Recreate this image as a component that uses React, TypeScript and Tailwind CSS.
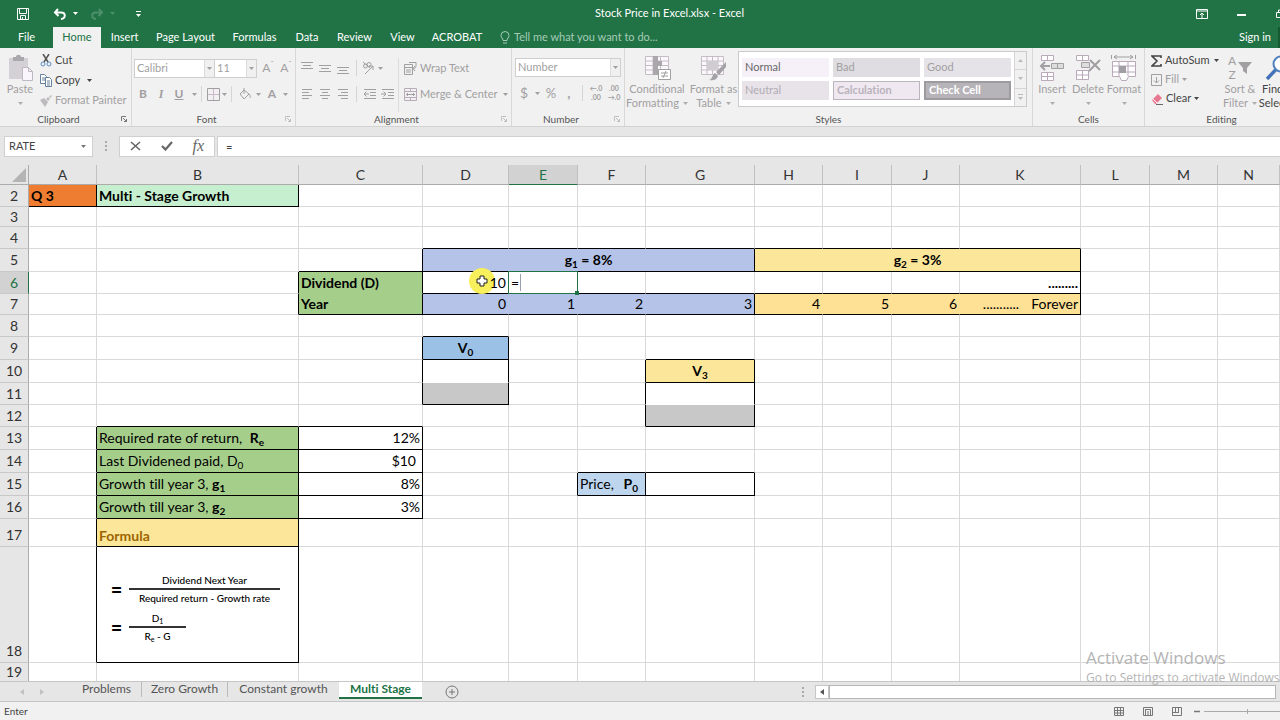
import { Fragment, type ReactNode } from 'react'
import clsx from 'clsx'
import { twMerge } from 'tailwind-merge'

const COLUMNS = [
  { name: 'A', width: 68 },
  { name: 'B', width: 202 },
  { name: 'C', width: 124 },
  { name: 'D', width: 86 },
  { name: 'E', width: 69 },
  { name: 'F', width: 68 },
  { name: 'G', width: 109 },
  { name: 'H', width: 68 },
  { name: 'I', width: 69 },
  { name: 'J', width: 68 },
  { name: 'K', width: 121 },
  { name: 'L', width: 69 },
  { name: 'M', width: 68 },
  { name: 'N', width: undefined },
]

const ROWS = [
  { n: 2, height: 22 },
  { n: 3, height: 20 },
  { n: 4, height: 22 },
  { n: 5, height: 23 },
  { n: 6, height: 22 },
  { n: 7, height: 21 },
  { n: 8, height: 22 },
  { n: 9, height: 23 },
  { n: 10, height: 23 },
  { n: 11, height: 22 },
  { n: 12, height: 22 },
  { n: 13, height: 23 },
  { n: 14, height: 23 },
  { n: 15, height: 23 },
  { n: 16, height: 23 },
  { n: 17, height: 28 },
  { n: 18, height: 116 },
  { n: 19, height: 19 },
]

// ranges with a black outline
const OUTLINES = [
  'A2:A2', 'B2:B2', 'C6:C7', 'D5:G5', 'H5:K5', 'D6:K6', 'D7:G7', 'H7:K7',
  'D9:D9', 'D10:D11', 'G10:G10', 'G11:G12', 'F15:F15', 'G15:G15',
  'B13:B13', 'B14:B14', 'B15:B15', 'B16:B16', 'C13:C13', 'C14:C14', 'C15:C15', 'C16:C16',
  'B17:B17', 'B18:B18',
].map((range) => {
  const [from, to] = range.split(':')
  return {
    left: from.charCodeAt(0),
    right: to.charCodeAt(0),
    top: Number(from.slice(1)),
    bottom: Number(to.slice(1)),
  }
})

const rightIsDark = (col: number, row: number) =>
  OUTLINES.some((o) => row >= o.top && row <= o.bottom && (o.right === col || o.left === col + 1))

const bottomIsDark = (col: number, row: number) =>
  OUTLINES.some((o) => col >= o.left && col <= o.right && (o.bottom === row || o.top === row + 1))

interface Cell {
  content?: ReactNode
  className?: string
  span?: number
}

const BLUE = 'bg-[#b4c3e7]'
const YELLOW = 'bg-[#fbe699]'
const GREEN = 'bg-[#a6ce8b]'

const Sub = ({ children }: { children: ReactNode }) => (
  <sub className="bottom-[-3px] text-[10px] leading-none">{children}</sub>
)

const CELLS: Record<string, Cell> = {
  A2: { content: 'Q 3', className: 'bg-[#ee7d31] font-bold' },
  B2: { content: 'Multi - Stage Growth', className: 'bg-[#c5efce] font-bold' },
  D5: { content: <>g<Sub>1</Sub> = 8%</>, className: `${BLUE} text-center font-bold`, span: 4 },
  H5: { content: <>g<Sub>2</Sub> = 3%</>, className: `${YELLOW} text-center font-bold`, span: 4 },
  C6: { content: 'Dividend (D)', className: `${GREEN} font-bold` },
  D6: { content: <PointerCell />, className: 'relative text-right' },
  E6: { content: <EditingCell />, className: 'relative' },
  K6: { content: '.........', className: 'text-right font-bold' },
  C7: { content: 'Year', className: `${GREEN} font-bold` },
  D7: { content: '0', className: `${BLUE} text-right` },
  E7: { content: '1', className: `${BLUE} text-right` },
  F7: { content: '2', className: `${BLUE} text-right` },
  G7: { content: '3', className: `${BLUE} text-right` },
  H7: { content: '4', className: 'bg-[#ffe195] text-right' },
  I7: { content: '5', className: 'bg-[#ffe195] text-right' },
  J7: { content: '6', className: 'bg-[#ffe195] text-right' },
  K7: { content: <><span className="mr-3">...........</span>Forever</>, className: 'bg-[#ffe195] text-right' },
  D9: { content: <>V<Sub>0</Sub></>, className: 'bg-[#9bc2e6] text-center font-bold' },
  D10: { className: 'bg-white' },
  D11: { className: 'bg-[#c8c8c8]' },
  G10: { content: <>V<Sub>3</Sub></>, className: `${YELLOW} text-center font-bold` },
  G11: { className: 'bg-white' },
  G12: { className: 'bg-[#c8c8c8]' },
  B13: { content: <>Required rate of return, <b className="ml-1">R<Sub>e</Sub></b></>, className: GREEN },
  C13: { content: '12%', className: 'text-right' },
  B14: { content: <>Last Dividened paid, D<Sub>0</Sub></>, className: GREEN },
  C14: { content: <span className="pr-1">$10</span>, className: 'text-right' },
  B15: { content: <>Growth till year 3, <b>g<Sub>1</Sub></b></>, className: GREEN },
  C15: { content: '8%', className: 'text-right' },
  F15: { content: <>Price, <b className="ml-1.5">P<Sub>0</Sub></b></>, className: 'bg-[#bdd6ee]' },
  B16: { content: <>Growth till year 3, <b>g<Sub>2</Sub></b></>, className: GREEN },
  C16: { content: '3%', className: 'text-right' },
  B17: { content: 'Formula', className: `${YELLOW} align-bottom pb-px font-bold text-[#9c6500]` },
  B18: { content: <FormulaPicture />, className: 'align-top' },
}

function PointerCell() {
  return (
    <>
      <span className="absolute top-[-4px] left-[46px] size-[26px] rounded-full bg-[#f8ef5c]" />
      <svg className="absolute top-[3px] left-[53px]" width="12" height="12" viewBox="0 0 12 12">
        <path d="M4 1h4v3h3v4H8v3H4V8H1V4h3z" fill="#fff" stroke="#222" />
      </svg>
      <span className="relative">10</span>
    </>
  )
}

function EditingCell() {
  return (
    <>
      <span className="border-r border-gray-400 pr-px">=</span>
      <span className="absolute -inset-px border border-[#217346]" />
      <span className="absolute -right-0.5 -bottom-0.5 size-1 bg-[#217346]" />
    </>
  )
}

function FormulaPicture() {
  return (
    <div className="flex flex-col gap-1 pt-[25px] pl-[11px] text-[10px] leading-4 font-medium">
      <div className="flex items-center gap-1.5">
        <EqualsSign />
        <div className="w-[151px] text-center">
          <div className="border-b-2 border-[#333]">Dividend Next Year</div>
          <div>Required return - Growth rate</div>
        </div>
      </div>
      <div className="flex items-center gap-1.5">
        <EqualsSign />
        <div className="w-[57px] text-center">
          <div className="border-b-2 border-[#333]">D<sub className="text-[7px]">1</sub></div>
          <div>R<sub className="text-[7px]">e</sub> - G</div>
        </div>
      </div>
    </div>
  )
}

const EqualsSign = () => <span className="w-[13px] text-center text-xl leading-4 font-bold">=</span>

const Caret = ({ className }: { className?: string }) => (
  <svg className={clsx('shrink-0', className)} width="5" height="3" viewBox="0 0 5 3">
    <path d="M0 0h5L2.5 3z" fill="currentColor" />
  </svg>
)

const Divider = () => <span className="h-4 w-px shrink-0 bg-[#d5d5d5]" />

interface IconProps {
  w: number
  h: number
  children: ReactNode
}

const Icon = ({ w, h, children }: IconProps) => (
  <svg className="shrink-0" width={w} height={h} viewBox={`0 0 ${w} ${h}`} fill="none" stroke="currentColor">
    {children}
  </svg>
)

function ToolButton({ label, className, children }: { label: string; className?: string; children: ReactNode }) {
  return (
    <button aria-label={label} className={twMerge('flex h-5 w-[18px] shrink-0 items-center justify-center', className)}>
      {children}
    </button>
  )
}

function BigButton({ icon, lines, className }: { icon: ReactNode; lines: string[]; className?: string }) {
  const [first, second] = lines
  return (
    <button className={clsx('flex shrink-0 flex-col items-center pt-1.5 leading-[14px] whitespace-nowrap', className)}>
      <span className="flex h-7 items-center">{icon}</span>
      <span>{first}</span>
      <span className="flex h-[14px] items-center gap-1">
        {second}
        <Caret className="opacity-80" />
      </span>
    </button>
  )
}

function RibbonGroup({ label, launcher, className, children }: {
  label: string
  launcher?: boolean
  className?: string
  children: ReactNode
}) {
  return (
    <section className={clsx('relative flex shrink-0 flex-col border-r border-[#d8d8d8]', className)}>
      <div className="flex h-16 text-[#a19fa1]">{children}</div>
      <div className={clsx('text-center text-[10px] leading-[14px] text-[#555]', launcher && 'pr-3.5')}>{label}</div>
      {launcher && (
        <button
          aria-label={`${label} settings`}
          className={clsx('absolute right-1 bottom-1', label === 'Clipboard' ? 'text-[#777]' : 'text-[#c0c0c0]')}
        >
          <Icon w={6} h={6}>
            <path d="M.5 5V.5H5M2 2l3.500 3.500M5.500 3v2.500H3" />
          </Icon>
        </button>
      )}
    </section>
  )
}

function Combo({ label, value, className }: { label: string; value: string; className?: string }) {
  return (
    <div className={clsx('relative h-[19px] border border-[#cfcfcf] bg-white', className)}>
      <select aria-label={label} className="block h-full w-full appearance-none bg-transparent pl-0.5 outline-none">
        <option>{value}</option>
      </select>
      <span className="pointer-events-none absolute inset-y-0 right-0 flex w-[10px] items-center justify-center border-l border-[#dcdcdc] bg-[#f0f0f0]">
        <Caret />
      </span>
    </div>
  )
}

const LineIcon = ({ rows }: { rows: [number, number, number][] }) => (
  <Icon w={12} h={14}>
    {rows.map(([x, y, len]) => (
      <path key={y} d={`M${x} ${y}.5h${len}`} />
    ))}
  </Icon>
)

function TitleBar() {
  return (
    <header className="relative flex h-[27px] shrink-0 items-center justify-between text-white">
      <div className="flex items-center pl-4">
        <ToolButton label="Save" className="w-[13px]">
          <Icon w={12} h={12}>
            <path d="M.5 .5h11v11H.500zM2.500 .5v5h7v-5M3.500 11.500v-4h5v4" />
            <path d="M5 9h1v2H5z" fill="currentColor" stroke="none" />
          </Icon>
        </ToolButton>
        <ToolButton label="Undo" className="ml-[22px]">
          <Icon w={14} h={12}>
            <path d="M5 1L2 4.500L5.500 8M2 4.500h6c5 0 5 6 0 6.500" strokeWidth="2" />
          </Icon>
        </ToolButton>
        <Caret className="mx-1" />
        <ToolButton label="Redo" className="ml-1.5 text-[#4d8f6b]">
          <Icon w={14} h={12}>
            <path d="M9 1l3 3.500L8.500 8M12 4.500H6c-5 0-5 6 0 6.500" strokeWidth="2" />
          </Icon>
        </ToolButton>
        <Caret className="mx-1 text-[#4d8f6b]" />
        <ToolButton label="Customize toolbar" className="ml-2.5">
          <Icon w={5} h={6}>
            <path d="M0 .5h5" />
            <path d="M0 3h5L2.500 6z" fill="currentColor" stroke="none" />
          </Icon>
        </ToolButton>
      </div>
      <h1 className="absolute inset-x-0 pl-[59px] text-center">Stock Price in Excel.xlsx - Excel</h1>
      <div className="flex items-center">
        <ToolButton label="Ribbon display options">
          <Icon w={12} h={10}>
            <path d="M.5 .5h11v9H.500zM.5 2h11M6 9V4M4 6l2-2 2 2" />
          </Icon>
        </ToolButton>
        <ToolButton label="Minimize" className="ml-[21px]">
          <Icon w={9} h={4}>
            <path d="M0 3h9" strokeWidth="2" />
          </Icon>
        </ToolButton>
        <ToolButton label="Restore" className="ml-[26px] w-1 justify-start overflow-hidden">
          <Icon w={10} h={10}>
            <path d="M.5 3.500h6v5h-6zM2.500 3V1h6v5H7" />
          </Icon>
        </ToolButton>
      </div>
    </header>
  )
}

const TABS = [
  { name: 'Insert', width: 'w-[47px]' },
  { name: 'Page Layout', width: 'w-[75px]' },
  { name: 'Formulas', width: 'w-[63px]' },
  { name: 'Data', width: 'w-[42px]' },
  { name: 'Review', width: 'w-[53px]' },
  { name: 'View', width: 'w-[43px]' },
  { name: 'ACROBAT', width: 'w-[66px]' },
]

function RibbonTabs() {
  return (
    <nav className="flex h-[21px] shrink-0 items-stretch whitespace-nowrap text-white">
      <button className="w-[53px] text-center">File</button>
      <button className="w-[48px] bg-[#f1f1f1] text-[#217346]">Home</button>
      {TABS.map((tab) => (
        <button key={tab.name} className={tab.width}>
          {tab.name}
        </button>
      ))}
      <label className="ml-2.5 flex flex-1 items-center gap-1 text-[#a5cbb5]">
        <Icon w={10} h={13}>
          <path d="M3 9.500C3 7 1 7 1 4.500a4 4 0 0 1 8 0C9 7 7 7 7 9.500zM3 12h4" />
        </Icon>
        <input
          aria-label="Tell me what you want to do"
          placeholder="Tell me what you want to do..."
          className="min-w-0 flex-1 bg-transparent outline-none placeholder:text-[#a5cbb5]"
        />
      </label>
      <button className="px-[7px]">Sign in</button>
      <span className="w-0.5 bg-[#14592f]" />
    </nav>
  )
}

function ClipboardGroup() {
  return (
    <RibbonGroup label="Clipboard" launcher className="w-[132px]">
      <BigButton
        className="w-10"
        lines={['Paste']}
        icon={
          <Icon w={26} h={28}>
            <path d="M2 4h19v21H2z" fill="#d3d1d6" stroke="none" />
            <path d="M6 3h3c0-3 5-3 5 0h3v4H6z" fill="#aaa8ad" stroke="none" />
            <path d="M15.500 13.500h6l4 4v9h-10zM21.500 13.500v4h4" fill="#faf4fc" stroke="#bdb8c2" />
          </Icon>
        }
      />
      <div className="flex flex-col gap-px pt-[3px] whitespace-nowrap text-[#444]">
        <button className="flex h-[19px] items-center gap-[3px]">
          <Icon w={12} h={13}>
            <path d="M3 0l5 8M9 0L4 8" stroke="#555" strokeWidth="1.500" />
            <circle cx="3" cy="10" r="2" stroke="#5b8dc1" />
            <circle cx="9" cy="10" r="2" stroke="#5b8dc1" />
          </Icon>
          Cut
        </button>
        <button className="flex h-[19px] items-center gap-[3px]">
          <Icon w={12} h={13}>
            <path d="M.5 .5h4l2 2v7h-6zM2 4h3M2 6h3" fill="#fff" stroke="#66819c" />
            <path d="M5.500 3.500h4l2 2v7h-6zM7 7h3M7 9h3M7 11h3" fill="#fff" stroke="#66819c" />
          </Icon>
          Copy
          <Caret className="ml-1" />
        </button>
        <button className="flex h-[19px] items-center gap-[3px] text-[#a19fa1]">
          <Icon w={12} h={12}>
            <path d="M0 5l4-2 4 4-3 5c-1-2-3-4-5-7zM6 4l2-2 2 2-2 2zM9 2l2-2 1 1-2 2z" fill="#bdbbbd" stroke="none" />
          </Icon>
          Format Painter
        </button>
      </div>
    </RibbonGroup>
  )
}

function FontGroup() {
  return (
    <RibbonGroup label="Font" launcher className="w-[164px]">
      <div className="flex flex-col pt-2.5 pl-0.5">
        <div className="flex items-center">
          <Combo label="Font" value="Calibri" className="w-[81px]" />
          <Combo label="Font size" value="11" className="-ml-px w-[43px]" />
          <ToolButton label="Increase font size" className="ml-0.5 text-xs">A<sup className="text-[8px]">ˆ</sup></ToolButton>
          <ToolButton label="Decrease font size" className="text-xs">A<sup className="text-[8px]">ˇ</sup></ToolButton>
        </div>
        <div className="flex items-center pt-1.5 text-xs">
          <ToolButton label="Bold"><b>B</b></ToolButton>
          <ToolButton label="Italic"><i className="font-['Liberation_Serif',serif] font-bold">I</i></ToolButton>
          <ToolButton label="Underline"><u className="font-bold">U</u></ToolButton>
          <Caret className="mx-1" />
          <Divider />
          <ToolButton label="Borders" className="ml-0.5">
            <Icon w={13} h={13}>
              <path d="M.5 .5h12v12H.500z" />
              <path d="M6.500 1v11M1 6.500h11" stroke="#cdb9cd" />
            </Icon>
          </ToolButton>
          <Caret className="mr-1" />
          <Divider />
          <ToolButton label="Fill color" className="ml-1">
            <Icon w={12} h={12}>
              <path d="M5 2l5 4-5 5-4-5zM5 6V0M10 6c2 2 1 3 1 4" />
            </Icon>
          </ToolButton>
          <Caret className="mx-0.5" />
          <ToolButton label="Font color"><b>A</b></ToolButton>
          <Caret className="mx-0.5" />
        </div>
      </div>
    </RibbonGroup>
  )
}

function AlignmentGroup() {
  return (
    <RibbonGroup label="Alignment" launcher className="w-[216px]">
      <div className="flex flex-col gap-1.5 pt-2.5 pl-0.5">
        <div className="flex h-5 items-center">
          <ToolButton label="Top align"><LineIcon rows={[[0, 1, 12], [2, 4, 8], [0, 7, 12]]} /></ToolButton>
          <ToolButton label="Middle align"><LineIcon rows={[[0, 4, 12], [2, 7, 8], [0, 10, 12]]} /></ToolButton>
          <ToolButton label="Bottom align"><LineIcon rows={[[0, 6, 12], [2, 9, 8], [0, 12, 12]]} /></ToolButton>
          <span className="w-1" />
          <Divider />
          <ToolButton label="Orientation" className="ml-[3px]">
            <Icon w={14} h={14}>
              <circle cx="3.500" cy="5" r="2" />
              <circle cx="7" cy="3.500" r="2" />
              <path d="M1 1l7 6M3 13l8-8M11 9V5H7" />
            </Icon>
          </ToolButton>
          <Caret />
        </div>
        <div className="flex h-5 items-center">
          <ToolButton label="Align left"><LineIcon rows={[[1, 2, 10], [1, 5, 7], [1, 8, 10], [1, 11, 7]]} /></ToolButton>
          <ToolButton label="Center"><LineIcon rows={[[1, 2, 10], [3, 5, 6], [1, 8, 10], [3, 11, 6]]} /></ToolButton>
          <ToolButton label="Align right"><LineIcon rows={[[1, 2, 10], [4, 5, 7], [1, 8, 10], [4, 11, 7]]} /></ToolButton>
          <span className="w-1" />
          <Divider />
          <ToolButton label="Decrease indent" className="ml-[3px]">
            <Icon w={13} h={13}>
              <path d="M1 1.500h12M7 4.500h6M7 7.500h6M1 10.500h12M6 6H1M3.500 3.500L1 6l2.500 2.500" />
            </Icon>
          </ToolButton>
          <ToolButton label="Increase indent">
            <Icon w={13} h={13}>
              <path d="M1 1.500h12M7 4.500h6M7 7.500h6M1 10.500h12M0 6h5M2.500 3.500L5 6 2.500 8.500" />
            </Icon>
          </ToolButton>
        </div>
      </div>
      <div className="mt-2.5 ml-0.5 flex flex-col gap-1.5 border-l border-[#dcdcdc] pl-[5px]">
        <button className="flex h-5 items-center gap-0.5 whitespace-nowrap">
          <Icon w={14} h={13}>
            <path d="M.5 2.500h8v10h-8zM.5 5.500h8M2 8h5M2 10h5M5 .5h7v3c0 3-2 3-3 3M11 4L9 6.500 11 9" />
          </Icon>
          Wrap Text
        </button>
        <button className="flex h-5 items-center gap-0.5 whitespace-nowrap">
          <Icon w={14} h={13}>
            <path d="M.5 .5h12v12H.500zM.5 3.500h12M.5 9.500h12M6.500 .5v3M6.500 9.500v3" stroke="#b9acb9" />
            <path d="M2 6.500h9M4 5L2.500 6.500 4 8M9 5l1.500 1.500L9 8" />
          </Icon>
          Merge &amp; Center
          <Caret className="ml-1" />
        </button>
      </div>
    </RibbonGroup>
  )
}

function NumberGroup() {
  return (
    <RibbonGroup label="Number" launcher className="w-[113px]">
      <div className="flex flex-col gap-1.5 pt-2.5 pl-[3px]">
        <Combo label="Number format" value="Number" className="w-[106px]" />
        <div className="flex items-center text-sm">
          <ToolButton label="Accounting format">$</ToolButton>
          <Caret className="mx-0.5" />
          <ToolButton label="Percent" className="text-[13px]">%</ToolButton>
          <ToolButton label="Comma style"><b>,</b></ToolButton>
          <span className="w-1" />
          <Divider />
          <ToolButton label="Increase decimal" className="ml-1 flex-col text-[7px] leading-[9px] font-bold">
            <span>←.0</span>
            <span>.00</span>
          </ToolButton>
          <ToolButton label="Decrease decimal" className="flex-col text-[7px] leading-[9px] font-bold">
            <span>.00</span>
            <span>→.0</span>
          </ToolButton>
        </div>
      </div>
    </RibbonGroup>
  )
}

const STYLES = [
  { name: 'Normal', className: 'bg-[#f6f0f8] text-[#666]' },
  { name: 'Bad', className: 'bg-[#dfdde1]' },
  { name: 'Good', className: 'bg-[#e6e3e8]' },
  { name: 'Neutral', className: 'bg-[#e8e3e9] text-[#b0abb2]' },
  { name: 'Calculation', className: 'border border-[#bbb5bd] bg-[#f0e8f1] font-bold text-[#b9b3bb]' },
  { name: 'Check Cell', className: 'border-2 border-[#9d9b9f] bg-[#b7b4b9] font-bold text-white' },
]

function StylesGroup() {
  return (
    <RibbonGroup label="Styles" className="w-[408px]">
      <BigButton
        className="w-[64px]"
        lines={['Conditional', 'Formatting']}
        icon={
          <Icon w={27} h={26}>
            <path d="M1.500 1.500h23v18h-23zM1 6h23M1 10.500h23M1 15h23M9 1v18M16.500 1v18" fill="#fbf8fb" stroke="#c6bcc6" />
            <path d="M9 1h5v5h4v5h-4v9H9z" fill="#aaa7ab" stroke="none" />
            <path d="M14.500 14.500h12v10h-12z" fill="#fff" />
            <path d="M17 18h7M17 21h7M22 16l-3 7" />
          </Icon>
        }
      />
      <BigButton
        className="w-[49px]"
        lines={['Format as', 'Table']}
        icon={
          <Icon w={27} h={26}>
            <path d="M1.500 1.500h22v18h-22zM1 6h22M1 10.500h22M1 15h22M7 1v18M12.500 1v18M18 1v18" fill="#fbf8fb" stroke="#c6bcc6" />
            <path d="M7 6h11v9H7z" fill="#d0cdd1" stroke="none" />
            <path d="M26 7v5l-7 8-3-3zM15 18l3 3c-1 4-5 5-9 4 4-1 3-6 6-7z" fill="#a5a2a7" stroke="none" />
          </Icon>
        }
      />
      <div className="mt-[3px] flex h-[56px] border border-[#cbcacc] bg-white text-[11px]">
        <div className="grid grid-cols-[87px_87px_87px] grid-rows-[19px_19px] content-center gap-x-1 gap-y-1 px-[3px]">
          {STYLES.map((style) => (
            <button key={style.name} className={clsx('flex items-center pl-[3px]', style.className)}>
              {style.name}
            </button>
          ))}
        </div>
        <div className="flex w-[12px] flex-col divide-y divide-[#d5d5d5] border-l border-[#d5d5d5] bg-[#f1f1f1] text-[#bbb]">
          <button aria-label="Previous styles" className="flex flex-1 items-center justify-center">
            <Caret className="rotate-180" />
          </button>
          <button aria-label="Next styles" className="flex flex-1 items-center justify-center"><Caret /></button>
          <button aria-label="More styles" className="flex flex-1 items-center justify-center">
            <Icon w={5} h={6}>
              <path d="M0 .5h5" />
              <path d="M0 3h5L2.500 6z" fill="currentColor" stroke="none" />
            </Icon>
          </button>
        </div>
      </div>
    </RibbonGroup>
  )
}

function CellsGroup() {
  return (
    <RibbonGroup label="Cells" className="w-[112px]">
      <BigButton
        className="w-[38px]"
        lines={['Insert']}
        icon={
          <Icon w={26} h={26}>
            <path d="M2.500 .5h12v5h-12zM8.500 .5v5M2.500 17.500h12v8h-12zM8.500 17.500v8M2.500 21.500h12" fill="#fff" stroke="#b9a9b9" />
            <path d="M12.500 8.500h12v5h-12zM18.500 8.500v5" fill="#ddd" />
            <path d="M11 11H2M6 7l-4 4 4 4" strokeWidth="2" />
          </Icon>
        }
      />
      <BigButton
        className="w-[34px]"
        lines={['Delete']}
        icon={
          <Icon w={26} h={26}>
            <path d="M1.500 .5h12v5h-12zM7.500 .5v5M1.500 15.500h12v9h-12zM7.500 15.500v9M1.500 20h12" fill="#fff" stroke="#b9a9b9" />
            <path d="M6.500 7.500h8v5h-8z" fill="#ddd" />
            <path d="M15 5l10 10M25 5L14 16" strokeWidth="2" />
          </Icon>
        }
      />
      <BigButton
        className="w-[38px]"
        lines={['Format']}
        icon={
          <Icon w={26} h={26}>
            <path d="M3 2h19M6 0L3 2l3 2M19 0l3 2-3 2M.5 0v4M24.500 0v4" />
            <path d="M1.500 6.500h23v15h-7l-2 4h-5l-2-4h-7zM1 11h23M1 17h23M8 6v15M17 6v15" fill="#fff" stroke="#b9a9b9" />
            <path d="M8 11h7v7H8z" fill="#a19fa1" stroke="none" />
          </Icon>
        }
      />
    </RibbonGroup>
  )
}

function EditingGroup() {
  return (
    <RibbonGroup label="Editing" className="w-[154px]">
      <div className="flex w-[76px] flex-col pt-[3px] pl-1.5 text-[#444]">
        <button className="flex h-[19px] items-center gap-[3px]">
          <Icon w={11} h={12}>
            <path d="M10 3V1H1l5 5-5 5h9V9" strokeWidth="1.600" />
          </Icon>
          AutoSum
          <Caret className="ml-0.5" />
        </button>
        <button className="flex h-[19px] items-center gap-[3px] text-[#a19fa1]">
          <Icon w={11} h={12}>
            <path d="M.5 .5h10v11H.500zM5.500 3v6M3 6.500L5.500 9 8 6.500" />
          </Icon>
          Fill
          <Caret />
        </button>
        <button className="flex h-[19px] items-center gap-[3px]">
          <Icon w={12} h={12}>
            <path d="M1 7l6-6 4 4-6 6H4z" fill="#e8788f" stroke="none" />
            <path d="M2 6l4 4" stroke="#fff" />
            <path d="M5 11.500h7" stroke="#666" />
          </Icon>
          Clear
          <Caret />
        </button>
      </div>
      <BigButton
        className="w-[38px]"
        lines={['Sort &', 'Filter']}
        icon={
          <span className="flex items-center gap-0.5">
            <span className="flex flex-col text-xs leading-[14px]">
              <span>A</span>
              <span>Z</span>
            </span>
            <Icon w={14} h={14}>
              <path d="M0 1h14L9 7v6L5 10V7z" fill="currentColor" stroke="none" />
            </Icon>
          </span>
        }
      />
      <BigButton
        className="w-[38px] text-[#444]"
        lines={['Find &', 'Select']}
        icon={
          <Icon w={26} h={26}>
            <circle cx="16" cy="9" r="7.500" fill="#fff" stroke="#4f81bd" strokeWidth="2" />
            <path d="M10.500 15L2 24" stroke="#4472b8" strokeWidth="3.500" />
          </Icon>
        }
      />
    </RibbonGroup>
  )
}

function FormulaBar() {
  return (
    <div className="flex h-[38px] shrink-0 items-center bg-[#e6e6e6] pl-1 text-[#444]">
      <div className="flex h-[21px] w-[89px] items-center border border-[#d0d0d0] bg-white pr-1.5">
        <input aria-label="Name box" defaultValue="RATE" className="w-full min-w-0 bg-transparent pl-1 outline-none" />
        <Caret className="text-[#777]" />
      </div>
      <span className="mx-3 flex flex-col gap-0.5">
        <i className="size-0.5 bg-[#aaa]" />
        <i className="size-0.5 bg-[#aaa]" />
        <i className="size-0.5 bg-[#aaa]" />
      </span>
      <div className="flex h-[21px] w-[96px] items-center justify-around border border-[#d0d0d0] bg-white text-[#666]">
        <ToolButton label="Cancel">
          <Icon w={11} h={10}><path d="M1 1l9 8M10 1L1 9" strokeWidth="1.600" /></Icon>
        </ToolButton>
        <ToolButton label="Enter">
          <Icon w={12} h={10}><path d="M1 5l3.500 3.500L11 1" strokeWidth="2.200" /></Icon>
        </ToolButton>
        <ToolButton label="Insert function" className="font-['Liberation_Serif',serif] text-base italic">
          fx
        </ToolButton>
      </div>
      <input
        aria-label="Formula"
        defaultValue="="
        className="ml-0.5 h-[21px] min-w-0 flex-1 border border-r-0 border-[#d0d0d0] bg-white pl-2 outline-none"
      />
    </div>
  )
}

function Sheet() {
  return (
    <table className="w-full table-fixed border-separate border-spacing-0 text-sm leading-[18px] text-black">
      <colgroup>
        <col style={{ width: 29 }} />
        {COLUMNS.map((col) => (
          <col key={col.name} style={{ width: col.width }} />
        ))}
      </colgroup>
      <thead>
        <tr className="h-5 bg-[#e6e6e6] text-[#333]">
          <th className="border-r border-b border-[#ababab] p-0">
            <svg className="mr-0.5 ml-auto" width="14" height="14" viewBox="0 0 14 14">
              <path d="M14 0v14H0z" fill="#b4b4b4" />
            </svg>
          </th>
          {COLUMNS.map((col) => (
            <th
              key={col.name}
              className={clsx(
                'border-r border-b p-0 align-bottom font-normal',
                col.name === 'E'
                  ? 'border-r-[#c0c0c0] border-b-[#217346] bg-[#d2d2d2] text-[#217346]'
                  : 'border-r-[#c0c0c0] border-b-[#ababab]',
              )}
            >
              {col.name}
            </th>
          ))}
        </tr>
      </thead>
      <tbody>
        {ROWS.map((row) => (
          <SheetRow key={row.n} n={row.n} height={row.height} />
        ))}
      </tbody>
    </table>
  )
}

function SheetRow({ n, height }: { n: number; height: number }) {
  let skip = 0
  return (
    <tr style={{ height }}>
      <th
        className={clsx(
          'border-r border-b px-0 pt-0 font-normal',
          n === 17 || n === 18 ? 'pb-0.5 align-bottom' : 'pb-0 align-middle',
          n === 6
            ? 'border-r-[#217346] border-b-[#c8c8c8] bg-[#d2d2d2] text-[#217346]'
            : 'border-r-[#ababab] border-b-[#c8c8c8] bg-[#e6e6e6] text-[#333]',
        )}
      >
        {n}
      </th>
      {COLUMNS.map((col) => {
        if (skip > 0) {
          skip -= 1
          return <Fragment key={col.name} />
        }
        const cell = CELLS[`${col.name}${n}`]
        const span = cell?.span ?? 1
        skip = span - 1
        const code = col.name.charCodeAt(0)
        const filled = cell?.className?.includes('bg-')
        return (
          <td
            key={col.name}
            colSpan={span}
            className={clsx(
              'border-r border-b px-0.5 py-0 whitespace-nowrap',
              rightIsDark(code + span - 1, n) ? 'border-r-black' : filled ? 'border-r-transparent' : 'border-r-[#d9d9d9]',
              bottomIsDark(code, n) ? 'border-b-black' : filled ? 'border-b-transparent' : 'border-b-[#d9d9d9]',
              cell?.className,
            )}
          >
            {cell?.content}
          </td>
        )
      })}
    </tr>
  )
}

function SheetTabs() {
  return (
    <div className="flex h-[21px] shrink-0 items-stretch border-y border-[#c6c6c6] bg-[#e6e6e6] text-xs whitespace-nowrap text-[#555]">
      <div className="flex w-[72px] items-center gap-4 pl-5 text-[#c0c0c0]">
        <button aria-label="Previous sheet"><Icon w={4} h={6}><path d="M4 0v6L0 3z" fill="currentColor" stroke="none" /></Icon></button>
        <button aria-label="Next sheet"><Icon w={4} h={6}><path d="M0 0v6l4-3z" fill="currentColor" stroke="none" /></Icon></button>
      </div>
      <button className="mb-1 w-[70px] border-r border-[#bbb] pb-0.5 leading-none">Problems</button>
      <button className="mb-1 w-[86px] border-r border-[#bbb] pb-0.5 leading-none">Zero Growth</button>
      <button className="mb-1 w-[111px] pb-0.5 leading-none">Constant growth</button>
      <button className="mb-0.5 w-[83px] border-b-2 border-[#217346] bg-white pb-0.5 leading-none font-bold text-[#217346]">
        Multi Stage
      </button>
      <button aria-label="New sheet" className="ml-[23px] text-[#777]">
        <Icon w={14} h={14}>
          <circle cx="7" cy="7" r="6" />
          <path d="M7 4v6M4 7h6" />
        </Icon>
      </button>
      <div className="ml-[343px] flex flex-1 items-center pr-1">
        <span className="flex w-[13px] flex-col gap-0.5">
          <i className="size-0.5 bg-[#aaa]" />
          <i className="size-0.5 bg-[#aaa]" />
          <i className="size-0.5 bg-[#aaa]" />
        </span>
        <button aria-label="Scroll left" className="flex h-[14px] w-[14px] items-center justify-center border border-[#c6c6c6] bg-white text-[#555]">
          <Icon w={4} h={6}><path d="M4 0v6L0 3z" fill="currentColor" stroke="none" /></Icon>
        </button>
        <span className="h-[14px] flex-1 border border-[#b5b5b5] bg-white" />
      </div>
    </div>
  )
}

function StatusBar() {
  return (
    <footer className="flex h-[18px] shrink-0 items-center justify-between bg-[#f1f1f1] pl-1 text-[10px] text-[#444]">
      <span>Enter</span>
      <div className="flex items-center text-[#777]">
        <ToolButton label="Normal view" className="mr-[11px]">
          <Icon w={10} h={9}><path d="M.5 .5h9v8h-9zM3.500 0v9M6.500 0v9M0 3.500h10M0 6h10" /></Icon>
        </ToolButton>
        <ToolButton label="Page layout view" className="mr-[11px]">
          <Icon w={10} h={9}><path d="M.5 .5h9v8h-9zM2.500 2.500h5v6M2.500 2v6M5 4v4" /></Icon>
        </ToolButton>
        <ToolButton label="Page break view" className="mr-1">
          <Icon w={10} h={9}><path d="M.5 .5h9v8h-9zM3.500 0v5M6.500 0v5M0 5.500h7" /></Icon>
        </ToolButton>
        <Icon w={90} h={9}>
          <path d="M4 4.500h6" strokeWidth="1.500" />
          <path d="M14 4.500h76M57.500 2v5" stroke="#aaa" />
        </Icon>
      </div>
    </footer>
  )
}

export default function App() {
  return (
    <div className="relative flex h-screen flex-col overflow-hidden bg-white font-[Lato,sans-serif] text-[11px] [font-variant-ligatures:none]">
      <div className="shrink-0 bg-[#217346]">
        <TitleBar />
        <RibbonTabs />
      </div>
      <div className="flex h-[79px] shrink-0 overflow-hidden border-b border-[#d2d2d2] bg-[#f1f1f1]">
        <ClipboardGroup />
        <FontGroup />
        <AlignmentGroup />
        <NumberGroup />
        <StylesGroup />
        <CellsGroup />
        <EditingGroup />
      </div>
      <FormulaBar />
      <main className="min-h-0 flex-1 overflow-hidden">
        <Sheet />
      </main>
      <SheetTabs />
      <StatusBar />
      <div className="pointer-events-none absolute right-0 bottom-[34px] w-[194px] font-['Open_Sans',sans-serif] whitespace-nowrap text-[#b4b4b4]">
        <div className="text-[17px] leading-6">Activate Windows</div>
        <div className="text-xs leading-4">Go to Settings to activate Windows</div>
      </div>
    </div>
  )
}
